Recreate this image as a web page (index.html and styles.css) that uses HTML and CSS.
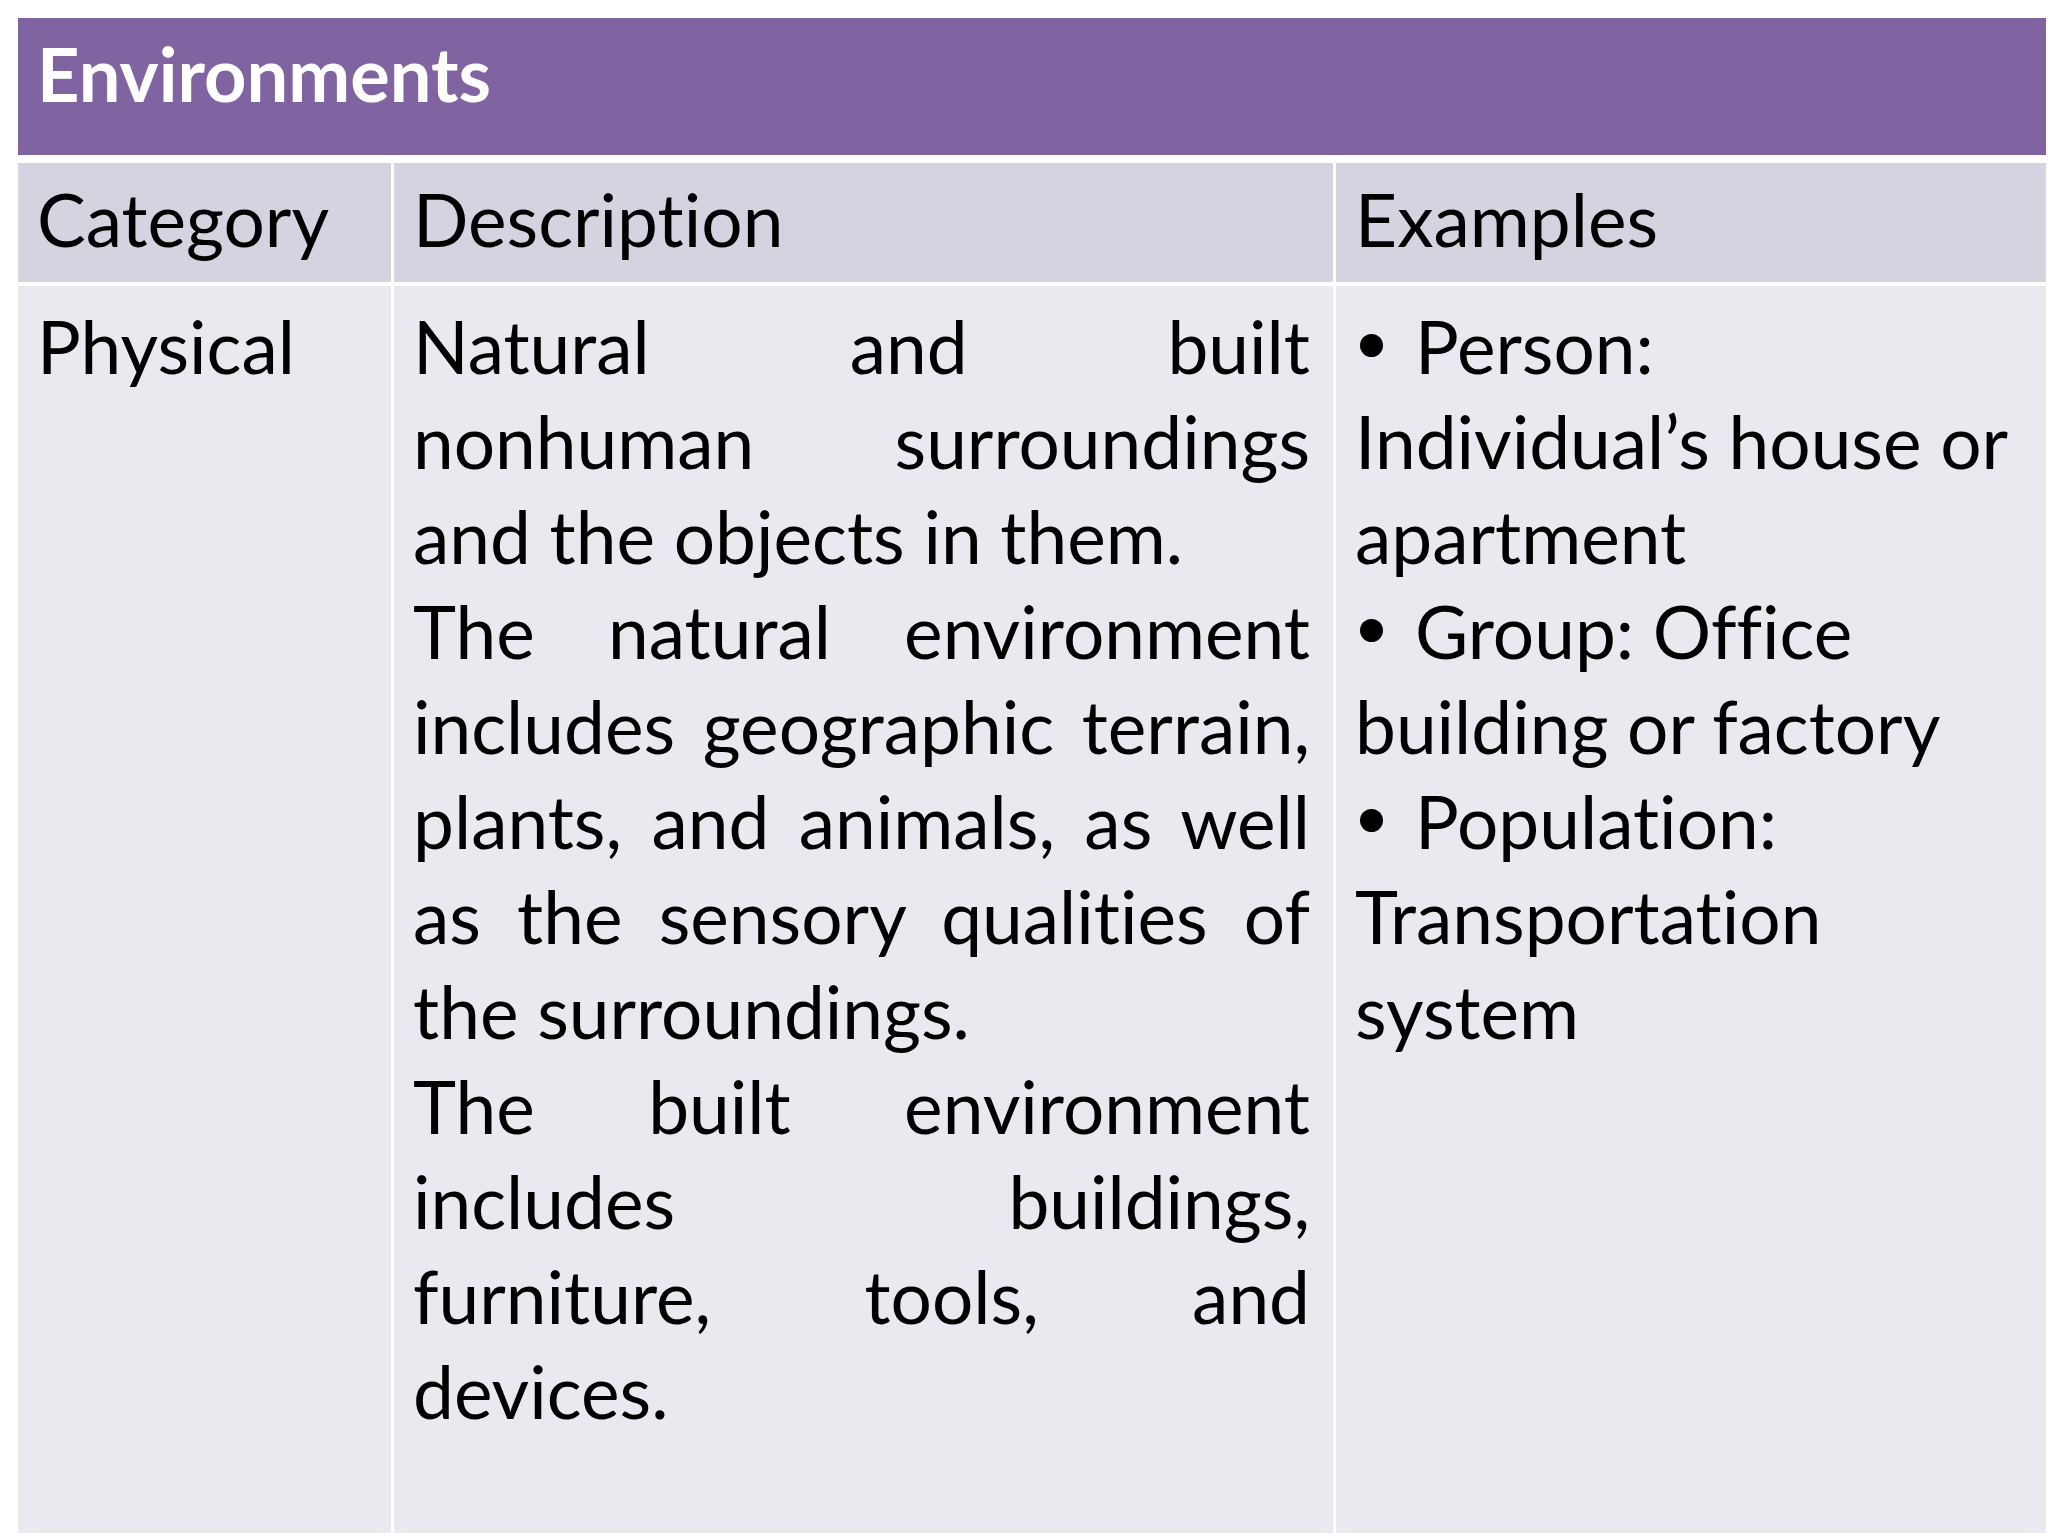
FILE: index.html
```html
<!DOCTYPE html>
<html lang="en">
<head>
<meta charset="utf-8">
<title>Environments</title>
<link rel="stylesheet" href="styles.css">
</head>
<body>
<div class="slide">
  <div class="titlebar"><h1 class="title">Environments</h1></div>
  <div class="table">
    <div class="cell head">Category</div>
    <div class="cell head">Description</div>
    <div class="cell head">Examples</div>
    <div class="cell body">Physical</div>
    <div class="cell body desc">
      <div class="jl">Natural and built</div>
      <div class="jl">nonhuman surroundings</div>
      <div class="ll">and the objects in them.</div>
      <div class="jl">The natural environment</div>
      <div class="jl">includes geographic terrain,</div>
      <div class="jl">plants, and animals, as well</div>
      <div class="jl">as the sensory qualities of</div>
      <div class="ll">the surroundings.</div>
      <div class="jl">The built environment</div>
      <div class="jl">includes buildings,</div>
      <div class="jl">furniture, tools, and</div>
      <div class="ll">devices.</div>
    </div>
    <div class="cell body ex">
      <div class="ll"><span class="bullet"><span class="dot"></span></span>Person:</div>
      <div class="ll">Individual’s house or</div>
      <div class="ll">apartment</div>
      <div class="ll"><span class="bullet"><span class="dot"></span></span>Group: Office</div>
      <div class="ll">building or factory</div>
      <div class="ll"><span class="bullet"><span class="dot"></span></span>Population:</div>
      <div class="ll">Transportation</div>
      <div class="ll">system</div>
    </div>
  </div>
</div>
</body>
</html>
```

FILE: styles.css
```css
html, body {
  margin: 0;
  padding: 0;
  background: #ffffff;
}
body {
  width: 2048px;
  height: 1536px;
  overflow: hidden;
  font-family: Lato, "Open Sans", "Liberation Sans", sans-serif;
  font-variant-ligatures: none;
  font-feature-settings: "liga" 0, "clig" 0;
  color: #000000;
}
.slide {
  padding: 18px 2px 0 18px;
  display: flex;
  flex-direction: column;
  gap: 8px;
}
.titlebar {
  height: 137px;
  background: #8064a2;
  box-sizing: border-box;
  padding: 8px 0 0 19px;
}
.title {
  margin: 0;
  font-size: 74px;
  font-weight: 700;
  line-height: 95px;
  color: #ffffff;
}
.table {
  display: grid;
  grid-template-columns: 373px 939px 1fr;
  grid-template-rows: 119px 1247px;
  column-gap: 3px;
  row-gap: 4px;
  background: #ffffff;
}
.cell {
  box-sizing: border-box;
  font-size: 73px;
  line-height: 95px;
  padding-left: 19px;
}
.head {
  background: #d4d3df;
  padding-top: 9px;
}
.body {
  background: #eae9f0;
  padding-top: 13px;
}
.desc {
  padding-right: 23px;
}
.jl {
  text-align: justify;
  text-align-last: justify;
}
.ll {
  text-align: left;
  white-space: nowrap;
}
.bullet {
  display: inline-block;
  width: 60px;
  height: 20px;
  position: relative;
}
.dot {
  position: absolute;
  left: 5px;
  top: -20px;
  width: 23px;
  height: 23px;
  border-radius: 50%;
  background: #000000;
}
```
